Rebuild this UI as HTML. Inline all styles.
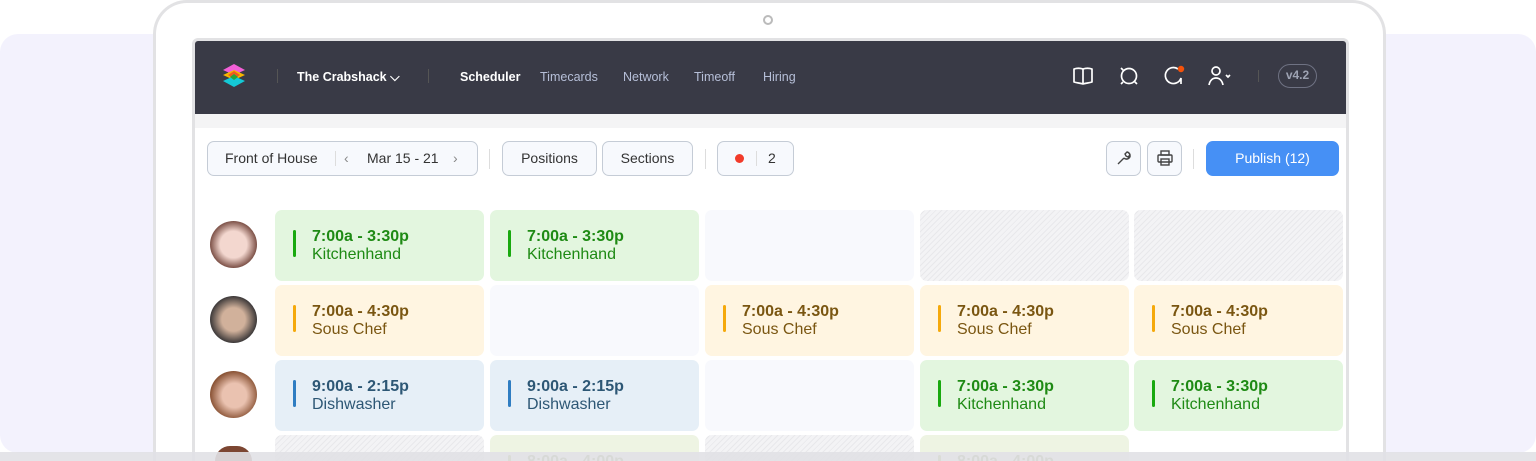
<!DOCTYPE html><html><head><meta charset="utf-8"><style>
*{box-sizing:border-box;margin:0;padding:0}
html,body{width:1536px;height:461px;overflow:hidden}
body{background:#fff;font-family:"Liberation Sans",sans-serif;position:relative}
#wrap{position:absolute;left:0;top:0;width:1536px;height:461px;overflow:hidden}
.bg{position:absolute;left:0;top:34px;width:1536px;height:419px;background:#f3f2fd;border-radius:18px}
.frame{position:absolute;left:153px;top:0;width:1233px;height:461px;background:#fff;border:3px solid #e2e2e4;border-bottom:none;border-radius:34px 34px 0 0}
.cam{position:absolute;left:763px;top:15px;width:10px;height:10px;border:2px solid #bbb;border-radius:50%}
.screen{position:absolute;left:192px;top:38px;width:1157px;height:423px;border:3px solid #e2e2e4;border-bottom:none;border-radius:6px 6px 0 0;overflow:hidden;background:#fff}
.nav{position:absolute;left:0;top:0;width:1151px;height:73px;background:#393a46}
.nav span{position:absolute;top:29px;font-size:12.5px;color:#b6bfd8}
.strip{position:absolute;left:0;top:73px;width:1151px;height:14px;background:#f4f4f5}
.btn{position:absolute;top:100px;height:35px;border:1.5px solid #c5ccd6;border-radius:7px;background:#f7f9fd;font-size:14px;color:#333;line-height:32px;text-align:center}
.sep{position:absolute;width:1px;background:#ddd}
.c{position:absolute;width:209px;border-radius:7px;padding:17px 0 0 37px;overflow:hidden}
.c b{display:block;font-size:16px;line-height:19px}
.c i{display:block;font-style:normal;font-size:16px;line-height:18px}
.c:before{content:"";position:absolute;left:18px;top:20px;width:3px;height:27px;border-radius:2px}
.g{background:#e3f6df;color:#1e8a14}.g:before{background:#19a90f}
.y{background:#fff5e1;color:#7a5611}.y:before{background:#f5a90c}
.bl{background:#e6eff7;color:#2d5775}.bl:before{background:#2f7dc2}
.e{background:#f8f9fd}
.h{background:repeating-linear-gradient(135deg,#f3f3f5 0 3px,#e8e8eb 3px 4px)}
.o{background:#eef4e3;color:#7b8a4a}.o:before{background:#9ab04a}
.av{position:absolute;width:47px;height:47px;border-radius:50%}
.bot{position:absolute;left:0;top:452px;width:1536px;height:9px;background:rgba(225,225,230,.9)}
</style></head><body><div id="wrap">
<div class="bg"></div>
<div class="frame"></div>
<div class="cam"></div>
<div class="screen">
<div class="nav">
<svg style="position:absolute;left:26px;top:21px" width="26" height="28" viewBox="0 0 26 28"><path d="M13 2 24 8 13 13 2 8Z" fill="#f35fd8"/><path d="M13 8 24 13 13 18 2 13Z" fill="#f7b500"/><path d="M13 9 19 13 13 17 7 13Z" fill="#ef5a1e"/><path d="M13 14 24 19 13 25 2 19Z" fill="#14c9d6"/><path d="M13 12 17 15 13 18 9 15Z" fill="#27a33a"/></svg>
<div class="sep" style="left:82px;top:28px;height:14px;background:#555"></div>
<span style="left:102px;color:#fff;font-weight:bold">The Crabshack ⌵</span>
<div class="sep" style="left:233px;top:28px;height:14px;background:#555"></div>
<span style="left:265px;color:#fff;font-weight:bold">Scheduler</span>
<span style="left:345px">Timecards</span>
<span style="left:428px">Network</span>
<span style="left:499px">Timeoff</span>
<span style="left:568px">Hiring</span>
<svg style="position:absolute;left:876px;top:23px" width="24" height="24" viewBox="0 0 24 24" fill="none" stroke="#fff" stroke-width="1.7"><path d="M12 5v15M3 5c3-1 6-1 9 0 3-1 6-1 9 0v13c-3 1-6 1-9 2-3-1-6-1-9-2Z" stroke-linejoin="round"/></svg>
<svg style="position:absolute;left:922px;top:23px" width="24" height="24" viewBox="0 0 24 24" fill="none" stroke="#fff" stroke-width="1.7"><circle cx="12" cy="12" r="7.5"/><path d="M4 4l3 3M20 20l-3-3M4 20l2-2"/></svg>
<svg style="position:absolute;left:967px;top:23px" width="24" height="24" viewBox="0 0 24 24" fill="none" stroke="#fff" stroke-width="1.7"><path d="M16 5A8 8 0 1 0 19 14V20"/><circle cx="19" cy="5" r="3.2" fill="#f5520a" stroke="none"/></svg>
<svg style="position:absolute;left:1012px;top:23px" width="28" height="24" viewBox="0 0 28 24" fill="none" stroke="#fff" stroke-width="1.7"><circle cx="9" cy="7" r="4"/><path d="M2 21c1-5 4-7 7-7s6 2 7 7M19 11l2 2 2-2"/></svg>
<div class="sep" style="left:1063px;top:29px;height:12px;background:#555"></div>
<div style="position:absolute;left:1083px;top:23px;width:39px;height:24px;border:1.5px solid #6f7283;border-radius:12px;color:#9ea3b3;font-size:12px;font-weight:bold;text-align:center;line-height:21px">v4.2</div>
</div>
<div class="strip"></div>
<div class="btn" style="left:12px;width:271px;text-align:left;padding-left:17px">Front of House<span style="position:absolute;left:127px;top:9px;width:1px;height:15px;background:#ddd"></span><span style="position:absolute;left:136px;color:#888">‹</span><span style="position:absolute;left:159px">Mar 15 - 21</span><span style="position:absolute;left:245px;color:#888">›</span></div>
<div class="sep" style="left:294px;top:108px;height:20px"></div>
<div class="btn" style="left:307px;width:95px">Positions</div>
<div class="btn" style="left:407px;width:91px">Sections</div>
<div class="sep" style="left:510px;top:108px;height:20px"></div>
<div class="btn" style="left:522px;width:77px"><span style="position:absolute;left:17px;top:12px;width:9px;height:9px;border-radius:50%;background:#f23b2a"></span><span style="position:absolute;left:38px;top:9px;width:1px;height:15px;background:#ddd"></span><span style="position:absolute;left:50px">2</span></div>
<div class="btn" style="left:911px;width:35px"><svg width="18" height="18" viewBox="0 0 18 18" style="margin-top:7px" fill="none" stroke="#444" stroke-width="1.4"><path d="M3 15l6-6M9 9a3.5 3.5 0 1 0 3-6l-2 2 1 2 2 1 2-2a3.5 3.5 0 0 1-6 3"/></svg></div>
<div class="btn" style="left:952px;width:35px"><svg width="18" height="18" viewBox="0 0 18 18" style="margin-top:7px" fill="none" stroke="#444" stroke-width="1.4"><rect x="5" y="2" width="8" height="4"/><rect x="2" y="6" width="14" height="7" rx="1"/><rect x="5" y="10" width="8" height="6"/></svg></div>
<div class="sep" style="left:998px;top:108px;height:20px"></div>
<div class="btn" style="left:1011px;width:133px;background:#4690f5;border-color:#4690f5;color:#fff">Publish (12)</div>
</div>
<div class="av" style="left:210px;top:221px;background:radial-gradient(circle at 50% 50%,#f3d7cf 40%,#6b3d33 75%)"></div>
<div class="av" style="left:210px;top:296px;background:radial-gradient(circle at 50% 50%,#d1b19b 35%,#3e3a3a 70%,#9eb3c2 90%)"></div>
<div class="av" style="left:210px;top:371px;background:radial-gradient(circle at 52% 52%,#eac2b0 35%,#8a5335 70%,#6e7d4d 95%)"></div>
<div class="av" style="left:215px;top:446px;width:37px;height:15px;border-radius:18px 18px 0 0;background:#7c4632"></div>
<div class="c g" style="left:275px;top:210px;height:71px"><b>7:00a - 3:30p</b><i>Kitchenhand</i></div>
<div class="c g" style="left:490px;top:210px;height:71px"><b>7:00a - 3:30p</b><i>Kitchenhand</i></div>
<div class="c e" style="left:705px;top:210px;height:71px"></div>
<div class="c h" style="left:920px;top:210px;height:71px"></div>
<div class="c h" style="left:1134px;top:210px;height:71px"></div>
<div class="c y" style="left:275px;top:285px;height:71px"><b>7:00a - 4:30p</b><i>Sous Chef</i></div>
<div class="c e" style="left:490px;top:285px;height:71px"></div>
<div class="c y" style="left:705px;top:285px;height:71px"><b>7:00a - 4:30p</b><i>Sous Chef</i></div>
<div class="c y" style="left:920px;top:285px;height:71px"><b>7:00a - 4:30p</b><i>Sous Chef</i></div>
<div class="c y" style="left:1134px;top:285px;height:71px"><b>7:00a - 4:30p</b><i>Sous Chef</i></div>
<div class="c bl" style="left:275px;top:360px;height:71px"><b>9:00a - 2:15p</b><i>Dishwasher</i></div>
<div class="c bl" style="left:490px;top:360px;height:71px"><b>9:00a - 2:15p</b><i>Dishwasher</i></div>
<div class="c e" style="left:705px;top:360px;height:71px"></div>
<div class="c g" style="left:920px;top:360px;height:71px"><b>7:00a - 3:30p</b><i>Kitchenhand</i></div>
<div class="c g" style="left:1134px;top:360px;height:71px"><b>7:00a - 3:30p</b><i>Kitchenhand</i></div>
<div class="c h" style="left:275px;top:435px;height:26px;border-radius:7px 7px 0 0"></div>
<div class="c o" style="left:490px;top:435px;height:26px;border-radius:7px 7px 0 0"><b>8:00a - 4:00p</b></div>
<div class="c h" style="left:705px;top:435px;height:26px;border-radius:7px 7px 0 0"></div>
<div class="c o" style="left:920px;top:435px;height:26px;border-radius:7px 7px 0 0"><b>8:00a - 4:00p</b></div>
<div class="bot"></div>
</div></body></html>
